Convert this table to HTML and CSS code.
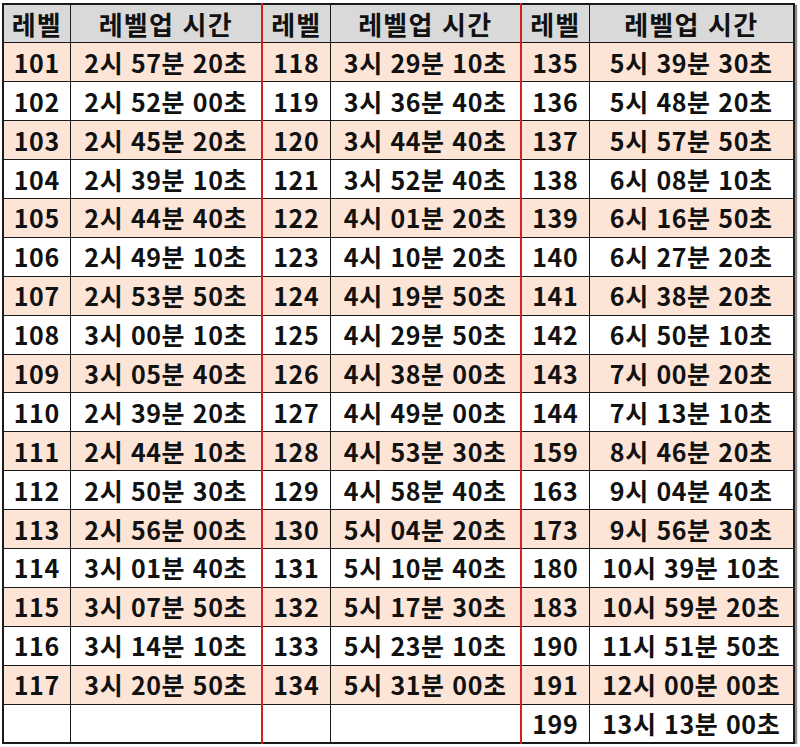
FILE: index.html
```html
<!DOCTYPE html>
<html lang="ko">
<head>
<meta charset="utf-8">
<link rel="stylesheet" href="styles.css">
</head>
<body>
<table class="lv">
  <colgroup>
    <col class="c-lv"><col class="c-t1"><col class="c-lv2"><col class="c-t2"><col class="c-lv3"><col class="c-t3">
  </colgroup>
  <thead>
    <tr><th>레벨</th><th>레벨업 시간</th><th class="rl">레벨</th><th class="rr">레벨업 시간</th><th>레벨</th><th>레벨업 시간</th></tr>
  </thead>
  <tbody>
    <tr class="alt"><td>101</td><td>2시 57분 20초</td><td class="rl">118</td><td class="rr">3시 29분 10초</td><td>135</td><td>5시 39분 30초</td></tr>
    <tr><td>102</td><td>2시 52분 00초</td><td class="rl">119</td><td class="rr">3시 36분 40초</td><td>136</td><td>5시 48분 20초</td></tr>
    <tr class="alt"><td>103</td><td>2시 45분 20초</td><td class="rl">120</td><td class="rr">3시 44분 40초</td><td>137</td><td>5시 57분 50초</td></tr>
    <tr><td>104</td><td>2시 39분 10초</td><td class="rl">121</td><td class="rr">3시 52분 40초</td><td>138</td><td>6시 08분 10초</td></tr>
    <tr class="alt"><td>105</td><td>2시 44분 40초</td><td class="rl">122</td><td class="rr">4시 01분 20초</td><td>139</td><td>6시 16분 50초</td></tr>
    <tr><td>106</td><td>2시 49분 10초</td><td class="rl">123</td><td class="rr">4시 10분 20초</td><td>140</td><td>6시 27분 20초</td></tr>
    <tr class="alt"><td>107</td><td>2시 53분 50초</td><td class="rl">124</td><td class="rr">4시 19분 50초</td><td>141</td><td>6시 38분 20초</td></tr>
    <tr><td>108</td><td>3시 00분 10초</td><td class="rl">125</td><td class="rr">4시 29분 50초</td><td>142</td><td>6시 50분 10초</td></tr>
    <tr class="alt"><td>109</td><td>3시 05분 40초</td><td class="rl">126</td><td class="rr">4시 38분 00초</td><td>143</td><td>7시 00분 20초</td></tr>
    <tr><td>110</td><td>2시 39분 20초</td><td class="rl">127</td><td class="rr">4시 49분 00초</td><td>144</td><td>7시 13분 10초</td></tr>
    <tr class="alt"><td>111</td><td>2시 44분 10초</td><td class="rl">128</td><td class="rr">4시 53분 30초</td><td>159</td><td>8시 46분 20초</td></tr>
    <tr><td>112</td><td>2시 50분 30초</td><td class="rl">129</td><td class="rr">4시 58분 40초</td><td>163</td><td>9시 04분 40초</td></tr>
    <tr class="alt"><td>113</td><td>2시 56분 00초</td><td class="rl">130</td><td class="rr">5시 04분 20초</td><td>173</td><td>9시 56분 30초</td></tr>
    <tr><td>114</td><td>3시 01분 40초</td><td class="rl">131</td><td class="rr">5시 10분 40초</td><td>180</td><td>10시 39분 10초</td></tr>
    <tr class="alt"><td>115</td><td>3시 07분 50초</td><td class="rl">132</td><td class="rr">5시 17분 30초</td><td>183</td><td>10시 59분 20초</td></tr>
    <tr><td>116</td><td>3시 14분 10초</td><td class="rl">133</td><td class="rr">5시 23분 10초</td><td>190</td><td>11시 51분 50초</td></tr>
    <tr class="alt"><td>117</td><td>3시 20분 50초</td><td class="rl">134</td><td class="rr">5시 31분 00초</td><td>191</td><td>12시 00분 00초</td></tr>
    <tr><td></td><td></td><td class="rl"></td><td class="rr"></td><td>199</td><td>13시 13분 00초</td></tr>
  </tbody>
</table>
</body>
</html>
```

FILE: styles.css
```css
html, body {
  margin: 0;
  padding: 0;
  background: #ffffff;
}

body {
  padding: 3px 0 0 2px;
}

.lv {
  border-collapse: collapse;
  table-layout: fixed;
  width: 793px;
  border: 2px solid #1a1a1a;
  box-shadow: 2px 2px 1px #8a8a8a;
  font-family: "Noto Sans CJK KR", "Noto Sans", sans-serif;
  font-weight: 700;
  font-size: 25px;
  color: #111111;
}

.c-lv { width: 67px; }
.c-t1 { width: 192px; }
.c-lv2 { width: 68px; }
.c-t2 { width: 191px; }
.c-lv3 { width: 68px; }
.c-t3 { width: 205px; }

.lv tr {
  height: 38.9px;
}

.lv th,
.lv td {
  border: 1px solid #1a1a1a;
  padding: 0;
  text-align: center;
  vertical-align: middle;
  line-height: 1;
  white-space: nowrap;
  letter-spacing: 0.6px;
}

.lv th {
  background: #d9d9d9;
  font-weight: 700;
  font-size: 26px;
  letter-spacing: 1.2px;
}

.lv tr.alt td {
  background: #fce4d6;
}

.lv .rl {
  border-left: 2px solid #d81e1e;
}

.lv .rr {
  border-right: 2px solid #d81e1e;
}
```
